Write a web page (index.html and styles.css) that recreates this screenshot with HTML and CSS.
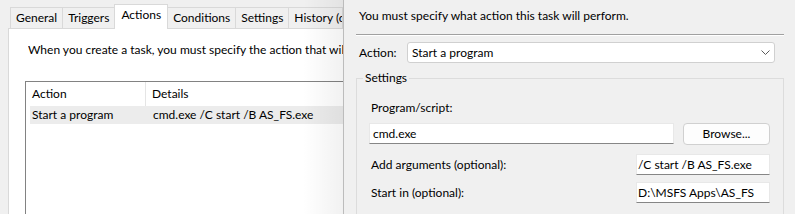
FILE: index.html
```html
<!DOCTYPE html>
<html>
<head>
<meta charset="utf-8">
<link rel="stylesheet" href="styles.css">
</head>
<body>
<div class="screen">
  <div class="left">
    <div class="tabs">
      <div class="tab">General</div>
      <div class="tab">Triggers</div>
      <div class="tab active">Actions</div>
      <div class="tab">Conditions</div>
      <div class="tab">Settings</div>
      <div class="tab tab-last">History (disabled)</div>
    </div>
    <div class="panel">
      <p class="intro">When you create a task, you must specify the action that will occur when your task starts.</p>
      <div class="table">
        <div class="thead">
          <div class="th th-action">Action</div>
          <div class="th th-details">Details</div>
        </div>
        <div class="trow">
          <div class="td td-action">Start a program</div>
          <div class="td td-details">cmd.exe /C start /B AS_FS.exe</div>
        </div>
      </div>
    </div>
  </div>
  <div class="right">
    <p class="title">You must specify what action this task will perform.</p>
    <div class="sep"></div>
    <div class="action-row">
      <span class="action-label">Action:</span>
      <div class="combo">
        <span>Start a program</span>
        <svg class="chev" width="9" height="5" viewBox="0 0 9 5"><path d="M0.5 0.5 L4.5 4.5 L8.5 0.5" fill="none" stroke="#5a5a5a" stroke-width="1"/></svg>
      </div>
    </div>
    <fieldset class="group">
      <legend>Settings</legend>
      <div class="lbl lbl-first">Program/script:</div>
      <div class="row row-prog">
        <div class="input input-prog">cmd.exe</div>
        <div class="btn">Browse...</div>
      </div>
      <div class="row row-opt row-args">
        <span class="lbl-inline">Add arguments (optional):</span>
        <div class="input input-small">/C start /B AS_FS.exe</div>
      </div>
      <div class="row row-opt row-start">
        <span class="lbl-inline">Start in (optional):</span>
        <div class="input input-small">D:\MSFS Apps\AS_FS</div>
      </div>
    </fieldset>
  </div>
</div>
</body>
</html>
```
FILE: styles.css
```css
html, body {
  margin: 0;
  padding: 0;
  background: #f0f0f0;
}
body {
  font-family: Lato, "Noto Sans", "Liberation Sans", sans-serif;
  font-size: 12px;
  color: #000;
}
.screen {
  display: flex;
  width: 795px;
  height: 214px;
  overflow: hidden;
}
.left {
  width: 343px;
  flex: none;
  background: #f0f0f0;
  position: relative;
  overflow: hidden;
  display: flex;
  flex-direction: column;
}
.left::after {
  content: "";
  position: absolute;
  top: 0;
  right: 0;
  width: 40px;
  height: 100%;
  background: linear-gradient(to right, rgba(0,0,0,0), rgba(0,0,0,0.055));
  pointer-events: none;
}
.tabs {
  flex: none;
  display: flex;
  padding: 7px 0 0 10px;
  height: 21px;
  align-items: flex-start;
  white-space: nowrap;
}
.tab {
  height: 20px;
  line-height: 20px;
  box-sizing: content-box;
  border: 1px solid #d9d9d9;
  border-bottom: none;
  border-left: none;
  background: #f0f0f0;
  padding: 0 5px;
  flex: none;
}
.tab:first-child {
  border-left: 1px solid #d9d9d9;
}
.tab-last {
  flex: 0 1 auto;
  min-width: 0;
  overflow: hidden;
}
.tab.active {
  background: #fff;
  margin-top: -3px;
  height: 24px;
  line-height: 20px;
  position: relative;
  z-index: 1;
  margin-left: -1px;
  padding: 0 6px;
  border-left: 1px solid #d9d9d9;
}
.panel {
  margin-left: 8px;
  flex: 1;
  min-width: 0;
  min-height: 0;
  background: #fff;
  border-top: 1px solid #d9d9d9;
  border-left: 1px solid #d9d9d9;
  padding: 13px 0 0 16px;
}
.intro {
  margin: 0 0 0 3px;
  line-height: 16px;
  white-space: nowrap;
  overflow: hidden;
}
.table {
  margin-top: 23px;
  border-top: 1px solid #828282;
  border-left: 1px solid #828282;
  background: #fff;
  height: 200px;
  white-space: nowrap;
  overflow: hidden;
}
.thead {
  display: flex;
  height: 24px;
}
.th {
  line-height: 24px;
  padding-left: 6px;
}
.th-action {
  width: 113px;
  border-right: 1px solid #e5e5e5;
}
.trow {
  display: flex;
  margin-left: 4px;
  height: 18px;
  background: #ececec;
}
.td {
  line-height: 18px;
}
.td-action {
  width: 116px;
  padding-left: 2px;
}
.td-details {
  padding-left: 5px;
}
.right {
  flex: 1;
  border-left: 1px solid #bcbcbc;
  background: #f0f0f0;
  padding: 8px 11px 0 12px;
  display: flex;
  flex-direction: column;
}
.title {
  margin: 0 0 0 3px;
  line-height: 16px;
  white-space: nowrap;
}
.sep {
  margin-top: 10px;
  height: 0;
  border-top: 1px solid #a0a0a0;
  border-bottom: 1px solid #fff;
}
.action-row {
  display: flex;
  align-items: center;
  margin-top: 6px;
}
.action-label {
  width: 48px;
  margin-left: 3px;
}
.combo {
  height: 19px;
  background: #fff;
  border: 1px solid #d0d0d0;
  border-radius: 3px;
  display: flex;
  align-items: center;
  justify-content: space-between;
  padding: 0 4px 0 4px;
  box-sizing: content-box;
  width: 358px;
}
.chev {
  display: block;
}
.group {
  margin: 7px 0 0 0;
  padding: 0 12px 20px 12px;
  border: 1px solid #dcdcdc;
  min-width: 0;
  flex: 1;
}
.group legend {
  margin-left: -6px;
  padding: 0 2px;
  line-height: 16px;
}
.lbl {
  line-height: 16px;
  margin-left: 2px;
}
.lbl-first {
  margin-top: 14px;
}
.row {
  display: flex;
  align-items: center;
  justify-content: space-between;
  width: 401px;
}
.row-prog {
  margin-top: 6px;
}
.row-args {
  margin-top: 9px;
}
.row-start {
  margin-top: 7px;
}
.lbl-inline {
  margin-left: 2px;
}
.input {
  background: #fff;
  border: 1px solid #e8e8e8;
  border-bottom: 1px solid #868686;
  height: 19px;
  line-height: 19px;
  white-space: nowrap;
  overflow: hidden;
  box-sizing: content-box;
}
.input-prog {
  width: 300px;
  padding-left: 3px;
}
.input-small {
  width: 131px;
  padding-left: 1px;
}
.btn {
  width: 85px;
  height: 20px;
  line-height: 20px;
  text-align: center;
  background: #fdfdfd;
  border: 1px solid #d0d0d0;
  border-radius: 4px;
  margin-top: 1px;
}
```
